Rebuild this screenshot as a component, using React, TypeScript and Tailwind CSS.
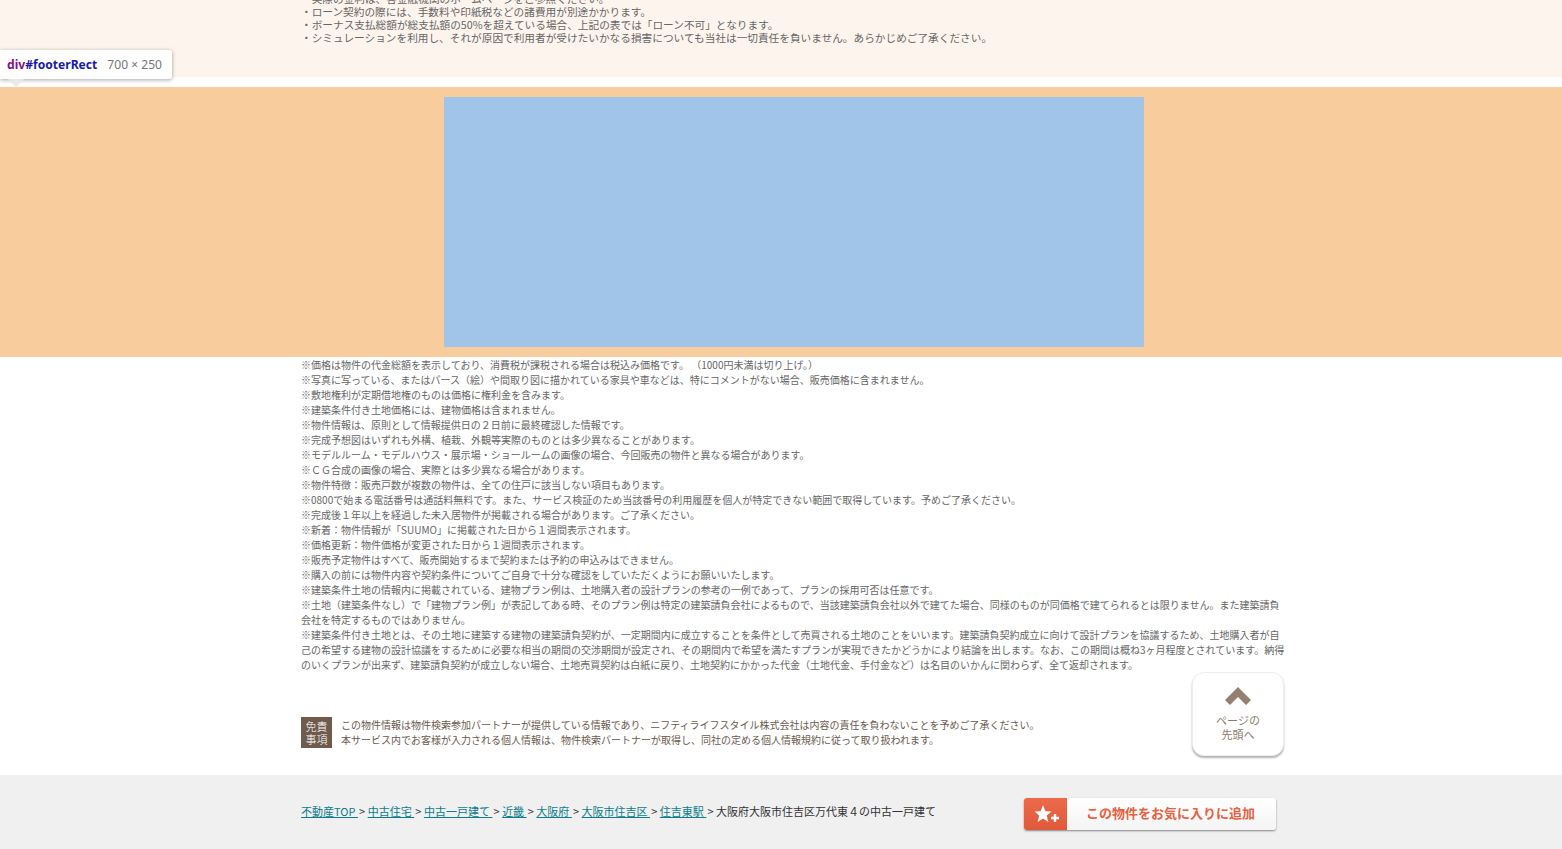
const font = "font-['Noto_Sans_CJK_JP','Noto_Sans',sans-serif]";

const loanNotes = [
  '・実際の金利は、各金融機関のホームページをご参照ください。',
  '・ローン契約の際には、手数料や印紙税などの諸費用が別途かかります。',
  '・ボーナス支払総額が総支払額の50%を超えている場合、上記の表では「ローン不可」となります。',
  '・シミュレーションを利用し、それが原因で利用者が受けたいかなる損害についても当社は一切責任を負いません。あらかじめご了承ください。',
];

const notes = [
  '※価格は物件の代金総額を表示しており、消費税が課税される場合は税込み価格です。 （1000円未満は切り上げ。）',
  '※写真に写っている、またはパース（絵）や間取り図に描かれている家具や車などは、特にコメントがない場合、販売価格に含まれません。',
  '※敷地権利が定期借地権のものは価格に権利金を含みます。',
  '※建築条件付き土地価格には、建物価格は含まれません。',
  '※物件情報は、原則として情報提供日の２日前に最終確認した情報です。',
  '※完成予想図はいずれも外構、植栽、外観等実際のものとは多少異なることがあります。',
  '※モデルルーム・モデルハウス・展示場・ショールームの画像の場合、今回販売の物件と異なる場合があります。',
  '※ＣＧ合成の画像の場合、実際とは多少異なる場合があります。',
  '※物件特徴：販売戸数が複数の物件は、全ての住戸に該当しない項目もあります。',
  '※0800で始まる電話番号は通話料無料です。また、サービス検証のため当該番号の利用履歴を個人が特定できない範囲で取得しています。予めご了承ください。',
  '※完成後１年以上を経過した未入居物件が掲載される場合があります。ご了承ください。',
  '※新着：物件情報が「SUUMO」に掲載された日から１週間表示されます。',
  '※価格更新：物件価格が変更された日から１週間表示されます。',
  '※販売予定物件はすべて、販売開始するまで契約または予約の申込みはできません。',
  '※購入の前には物件内容や契約条件についてご自身で十分な確認をしていただくようにお願いいたします。',
  '※建築条件土地の情報内に掲載されている、建物プラン例は、土地購入者の設計プランの参考の一例であって、プランの採用可否は任意です。',
  '※土地（建築条件なし）で「建物プラン例」が表記してある時、そのプラン例は特定の建築請負会社によるもので、当該建築請負会社以外で建てた場合、同様のものが同価格で建てられるとは限りません。また建築請負会社を特定するものではありません。',
  '※建築条件付き土地とは、その土地に建築する建物の建築請負契約が、一定期間内に成立することを条件として売買される土地のことをいいます。建築請負契約成立に向けて設計プランを協議するため、土地購入者が自己の希望する建物の設計協議をするために必要な相当の期間の交渉期間が設定され、その期間内で希望を満たすプランが実現できたかどうかにより結論を出します。なお、この期間は概ね3ヶ月程度とされています。納得のいくプランが出来ず、建築請負契約が成立しない場合、土地売買契約は白紙に戻り、土地契約にかかった代金（土地代金、手付金など）は名目のいかんに関わらず、全て返却されます。',
];

const crumbs = ['不動産TOP ', '中古住宅 ', '中古一戸建て ', '近畿 ', '大阪府 ', '大阪市住吉区 ', '住吉東駅 '];

export default function App() {
  return (
    <div className={`${font} relative h-[849px] overflow-hidden bg-white`}>
      {/* loan notes, scrolled off the top */}
      <div className="h-[77px] overflow-hidden bg-[#fdf4ee]">
        <div className="ml-[301px] mt-[-8px] text-[10.67px] leading-[13px] text-[#666]">
          {loanNotes.map((t) => (
            <p key={t}>{t}</p>
          ))}
        </div>
      </div>

      {/* devtools highlight */}
      <div className="mt-[10px] h-[270px] bg-[#f9cc9d] pl-[444px] pt-[10px]">
        <div className="h-[250px] w-[700px] bg-[#a0c5e8]" />
      </div>

      {/* devtools tooltip */}
      <div className="absolute left-0 top-[50px] flex h-[29px] w-[172px] items-center gap-[10px] rounded-r-[3px] bg-white pl-[7px] pt-[2px] font-['Noto_Sans',sans-serif] text-[12.1px] shadow-[0_1px_4px_rgba(0,0,0,0.35)]">
        <span className="font-bold">
          <span className="text-[#881280]">div</span>
          <span className="text-[#1a1aa6]">#footerRect</span>
        </span>
        <span className="text-[#777]">700 × 250</span>
        <div className="absolute left-[8px] top-[29px] h-0 w-0 border-x-[8px] border-t-[8px] border-x-transparent border-t-[#ece8e4]" />
      </div>

      <div className="ml-[301px] w-[984px] text-[10px] leading-[15px] text-[#666]">
        {notes.map((t) => (
          <p key={t}>{t}</p>
        ))}
      </div>

      <div className="ml-[301px] flex h-[103px] w-[983px] items-start justify-between">
        <div className="mt-[45px] flex items-start gap-[9px]">
          <div className="h-[31px] w-[31px] bg-[#6f5a4b] pt-[3px] text-center text-[11px] font-light leading-[13px] text-white">
            免責
            <br />
            事項
          </div>
          <div className="text-[10px] leading-[15px] text-[#6b5a4e]">
            <p>この物件情報は物件検索参加パートナーが提供している情報であり、ニフティライフスタイル株式会社は内容の責任を負わないことを予めご了承ください。</p>
            <p>本サービス内でお客様が入力される個人情報は、物件検索パートナーが取得し、同社の定める個人情報規約に従って取り扱われます。</p>
          </div>
        </div>
        <a className="flex h-[84px] w-[92px] flex-col items-center rounded-[12px] border border-[#eeeeee] bg-white pt-[14px] text-[11px] leading-[14px] text-[#8c7a6b] shadow-[0_2px_2px_rgba(0,0,0,0.3)]">
          <svg width="28" height="20" viewBox="0 0 28 20" fill="#94806f">
            <path d="M14 0 L27 13 L22 18 L14 10 L6 18 L1 13 Z" />
          </svg>
          <span className="mt-[6px] text-center">
            ページの
            <br />
            先頭へ
          </span>
        </a>
      </div>

      {/* footer bar */}
      <div className="flex h-[74px] items-start bg-[#f0f0f0] pl-[301px] pt-[23px]">
        <div className="mt-[6px] w-[723px] whitespace-pre text-[11px] leading-[15px] text-[#333]">
          {crumbs.map((c) => (
            <span key={c}>
              <a className="text-[#0b7d8c] underline">{c}</a>
              <span className="ml-[1.2px]">{'> '}</span>
            </span>
          ))}
          大阪府大阪市住吉区万代東４の中古一戸建て
        </div>
        <a className="flex h-[32px] w-[252px] overflow-hidden rounded-[3px] bg-gradient-to-b from-white to-[#f4f4f4] shadow-[0_1px_2px_rgba(0,0,0,0.45)]">
          <span className="flex h-full w-[43px] items-center justify-center bg-gradient-to-b from-[#ea6b4b] to-[#e0583a]">
            <svg width="27" height="20" viewBox="0 0 27 20" fill="white">
              <path d="M11 1 L13.4 7.2 L19.5 7.5 L14.8 11.5 L16.4 18 L11 14.4 L5.6 18 L7.2 11.5 L2.5 7.5 L8.6 7.2 Z" />
              <path d="M21.8 10 h2.4 v2.8 h2.8 v2.4 h-2.8 v2.8 h-2.4 v-2.8 h-2.8 v-2.4 h2.8 z" />
            </svg>
          </span>
          <span className="flex flex-1 items-center justify-center pb-[2px] pr-[2px] text-[13px] font-bold text-[#e8603f]">
            この物件をお気に入りに追加
          </span>
        </a>
      </div>
    </div>
  );
}
